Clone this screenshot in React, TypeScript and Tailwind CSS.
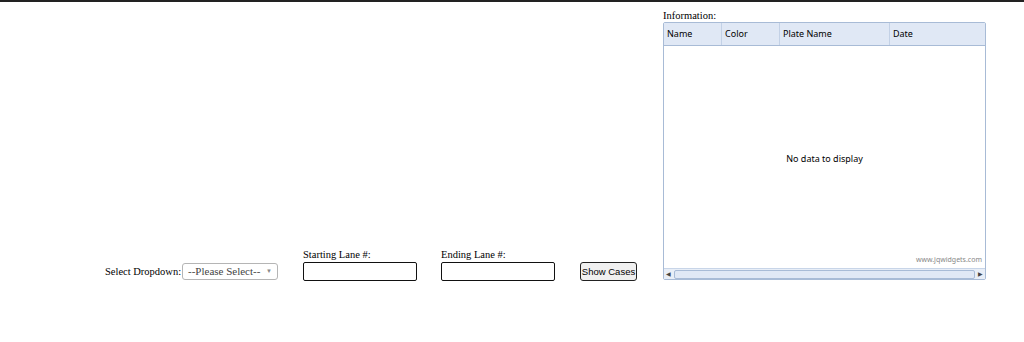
export default function App() {
    const columns = [
        { label: "Name", w: "w-[58px]" },
        { label: "Color", w: "w-[58px]" },
        { label: "Plate Name", w: "w-[110px]" },
        { label: "Date", w: "flex-1" },
    ];

    return (
        <div className="h-[342px] w-[1024px] bg-white border-t-2 border-[#222] font-['Liberation_Serif',serif] text-[10.5px] text-black">
            <div className="flex items-end pl-[105px] pt-[8px]">
                {/* form */}
                <div className="-mb-[1px] flex items-end">
                    <div className="flex items-center pb-[1px]">
                        <span className="w-[77px] shrink-0 whitespace-nowrap">Select Dropdown:</span>
                        <div className="flex h-[17px] w-[96px] items-center justify-between whitespace-nowrap rounded-[3px] border border-[#b5b5b5] px-[5px] text-[11px] text-[#444]">
                            <span>--Please Select--</span>
                            <span className="text-[6px] text-[#888]">▼</span>
                        </div>
                    </div>
                    <div className="ml-[25px] flex flex-col">
                        <span className="whitespace-nowrap leading-[14px]">Starting Lane #:</span>
                        <div className="h-[19px] w-[114px] rounded-[2px] border-[1.5px] border-[#111]" />
                    </div>
                    <div className="ml-[24px] flex flex-col">
                        <span className="whitespace-nowrap leading-[14px]">Ending Lane #:</span>
                        <div className="h-[19px] w-[114px] rounded-[2px] border-[1.5px] border-[#111]" />
                    </div>
                    <button className="ml-[25px] h-[19px] w-[57px] whitespace-nowrap rounded-[3px] border border-[#222] bg-[#f0f0f0] font-['Liberation_Sans',sans-serif] text-[9.5px] leading-none">
                        Show Cases
                    </button>
                </div>

                {/* grid */}
                <div className="ml-[26px] flex flex-col">
                    <span className="leading-[12px]">Information:</span>
                    <div className="flex h-[258px] w-[323px] flex-col rounded-[2px] border border-[#a8bbd6] font-['Noto_Sans',sans-serif] text-[9px]">
                        <div className="flex h-[23px] bg-[#e0e8f5] border-b border-[#a8bbd6]">
                            {columns.map((c) => (
                                <div key={c.label} className={`${c.w} flex items-center border-r border-[#c3d1e6] pl-[3px] last:border-r-0`}>
                                    {c.label}
                                </div>
                            ))}
                        </div>
                        <div className="relative flex flex-1 items-center justify-center">
                            <span className="mt-[4px]">No data to display</span>
                            <span className="absolute bottom-[3px] right-[3px] text-[7px] text-[#888]">www.jqwidgets.com</span>
                        </div>
                        <div className="flex h-[11px] items-center bg-[#e8eef7] border-t border-[#c8d5e8] px-[2px]">
                            <span className="text-[6px] text-[#444]">◀</span>
                            <div className="mx-[3px] h-[9px] flex-1 rounded-[2px] border border-[#a8bbd6] bg-[#e0e8f5]" />
                            <span className="text-[6px] text-[#444]">▶</span>
                        </div>
                    </div>
                </div>
            </div>
        </div>
    );
}
